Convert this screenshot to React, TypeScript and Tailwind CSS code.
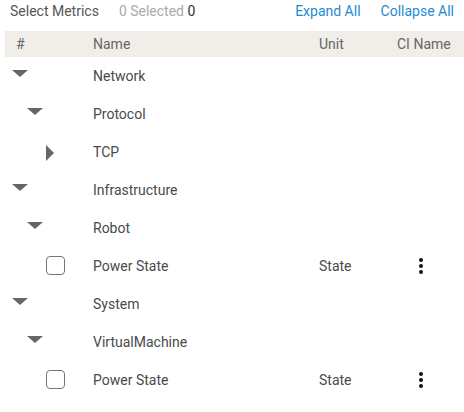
import React from "react";

type Row = {
    name: string;
    kind: "down" | "right" | "check";
    pad: string;
    unit?: string;
};

const ROWS: Row[] = [
    { name: "Network", kind: "down", pad: "pl-[7px]" },
    { name: "Protocol", kind: "down", pad: "pl-[22px]" },
    { name: "TCP", kind: "right", pad: "pl-[41px]" },
    { name: "Infrastructure", kind: "down", pad: "pl-[7px]" },
    { name: "Robot", kind: "down", pad: "pl-[22px]" },
    { name: "Power State", kind: "check", pad: "pl-[41px]", unit: "State" },
    { name: "System", kind: "down", pad: "pl-[7px]" },
    { name: "VirtualMachine", kind: "down", pad: "pl-[22px]" },
    { name: "Power State", kind: "check", pad: "pl-[41px]", unit: "State" },
];

function Marker({ kind }: { kind: Row["kind"] }) {
    if (kind === "down") {
        return <span className="block w-0 h-0 border-l-[8px] border-r-[8px] border-t-[7px] border-l-transparent border-r-transparent border-t-[#666666] mt-[-5px]" />;
    }
    if (kind === "right") {
        return <span className="block w-0 h-0 border-t-[8px] border-b-[8px] border-l-[8px] border-t-transparent border-b-transparent border-l-[#666666] mt-[2px]" />;
    }
    return <span className="block w-[19px] h-[19px] rounded-[4px] border border-[#757575] bg-white mt-[-1px]" />;
}

function Kebab() {
    return (
        <div className="flex flex-col items-center gap-[2px] w-[6px]">
            <span className="w-[4px] h-[4px] rounded-full bg-[#111]" />
            <span className="w-[4px] h-[4px] rounded-full bg-[#111]" />
            <span className="w-[4px] h-[4px] rounded-full bg-[#111]" />
        </div>
    );
}

export default function App() {
    return (
        <div className="w-[464px] h-[412px] bg-white overflow-hidden text-[14px] text-[#4a4a4a] font-['Roboto',sans-serif]">
            {/* Toolbar */}
            <div className="h-[23px] flex items-center pl-[10px] pr-[10px]">
                <span className="text-[#555]">Select Metrics</span>
                <span className="ml-[20px] text-[#aaa]">
                    0 Selected <span className="text-[#333]">0</span>
                </span>
                <span className="ml-auto text-[#1f8ad2]">Expand All</span>
                <span className="ml-[20px] text-[#1f8ad2]">Collapse All</span>
            </div>

            <div className="ml-[5px] mt-[8px]">
                {/* Header */}
                <div className="grid grid-cols-[88px_226px_78px_1fr] h-[26px] items-center bg-[#f1eeea] text-[#666]">
                    <span className="pl-[11px]">#</span>
                    <span>Name</span>
                    <span>Unit</span>
                    <span>CI Name</span>
                </div>

                {ROWS.map((row, i) => (
                    <div key={i} className="grid grid-cols-[88px_226px_78px_1fr] h-[38px] items-center">
                        <div className={`flex items-center ${row.pad}`}>
                            <Marker kind={row.kind} />
                        </div>
                        <span>{row.name}</span>
                        <span>{row.unit}</span>
                        <div className="pl-[21px]">{row.unit && <Kebab />}</div>
                    </div>
                ))}
            </div>
        </div>
    );
}
